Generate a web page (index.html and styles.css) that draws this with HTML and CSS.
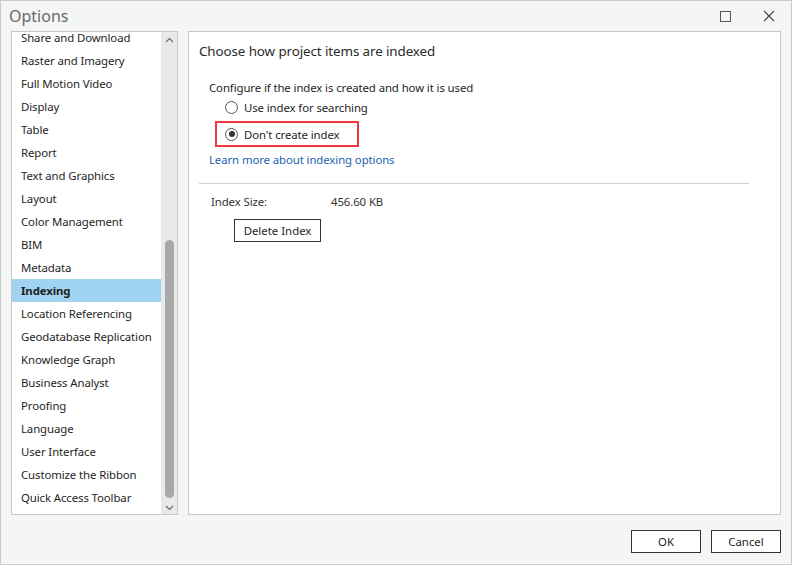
FILE: index.html
```html
<!DOCTYPE html>
<html lang="en">
<head>
    <meta charset="UTF-8">
    <title>Options</title>
    <link rel="stylesheet" href="styles.css">
</head>
<body>
    <div class="window">
        <div class="titlebar">
            <span class="title">Options</span>
            <div class="controls">
                <span class="max"></span>
                <svg class="close" width="12" height="12" viewBox="0 0 12 12">
                    <path d="M1 1 L11 11 M11 1 L1 11" stroke="#444" stroke-width="1.1" fill="none"/>
                </svg>
            </div>
        </div>

        <div class="body">
            <div class="sidebar">
                <ul class="menu">
                    <li>Share and Download</li>
                    <li>Raster and Imagery</li>
                    <li>Full Motion Video</li>
                    <li>Display</li>
                    <li>Table</li>
                    <li>Report</li>
                    <li>Text and Graphics</li>
                    <li>Layout</li>
                    <li>Color Management</li>
                    <li>BIM</li>
                    <li>Metadata</li>
                    <li class="active">Indexing</li>
                    <li>Location Referencing</li>
                    <li>Geodatabase Replication</li>
                    <li>Knowledge Graph</li>
                    <li>Business Analyst</li>
                    <li>Proofing</li>
                    <li>Language</li>
                    <li>User Interface</li>
                    <li>Customize the Ribbon</li>
                    <li>Quick Access Toolbar</li>
                </ul>
                <div class="scrollbar">
                    <svg class="arrow" width="9" height="6" viewBox="0 0 9 6">
                        <path d="M1 5 L4.5 1.5 L8 5" stroke="#666" stroke-width="1.1" fill="none"/>
                    </svg>
                    <div class="track">
                        <div class="thumb"></div>
                    </div>
                    <svg class="arrow" width="9" height="6" viewBox="0 0 9 6">
                        <path d="M1 1 L4.5 4.5 L8 1" stroke="#666" stroke-width="1.1" fill="none"/>
                    </svg>
                </div>
            </div>

            <div class="panel">
                <h2>Choose how project items are indexed</h2>

                <div class="section">
                    <p class="label">Configure if the index is created and how it is used</p>
                    <div class="radios">
                        <div class="radio">
                            <span class="dot"></span>
                            Use index for searching
                        </div>
                        <div class="radio checked highlight">
                            <span class="dot"></span>
                            Don't create index
                        </div>
                    </div>
                    <a class="link" href="#">Learn more about indexing options</a>
                </div>

                <hr>

                <div class="size-row">
                    <span class="size-label">Index Size:</span><span>456.60 KB</span>
                </div>
                <button class="btn delete">Delete Index</button>
            </div>
        </div>

        <div class="footer">
            <button class="btn">OK</button>
            <button class="btn">Cancel</button>
        </div>
    </div>
</body>
</html>
```

FILE: styles.css
```css
body {
    margin: 0;
    font-family: "Noto Sans", "Open Sans", sans-serif;
    font-size: 11.4px;
    letter-spacing: -0.1px;
    color: #1e1e1e;
}

.window {
    width: 792px;
    height: 565px;
    box-sizing: border-box;
    background-color: #f4f6f5;
    border: 1px solid #c9cbcb;
    display: flex;
    flex-direction: column;
}

.titlebar {
    height: 30px;
    display: flex;
    align-items: center;
    justify-content: space-between;
    padding-left: 8px;
}

.title {
    font-size: 16px;
    letter-spacing: 0;
    color: #6a6a6a;
}

.controls {
    display: flex;
    align-items: center;
    gap: 32px;
    padding-right: 16px;
}

.max {
    width: 9px;
    height: 9px;
    border: 1px solid #555;
}

.body {
    display: flex;
    gap: 10px;
    padding: 0 10px;
    height: 484px;
}

/* left list */
.sidebar {
    width: 167px;
    box-sizing: border-box;
    border: 1px solid #c6c8c8;
    background-color: #fff;
    display: flex;
    overflow: hidden;
}

.menu {
    list-style: none;
    margin: -6px 0 0 0;
    padding: 0;
    flex: 1;
}

.menu li {
    height: 23px;
    line-height: 23px;
    padding-left: 9px;
    white-space: nowrap;
}

.menu li.active {
    background-color: #a1d4f1;
    font-weight: bold;
}

.scrollbar {
    width: 16px;
    background-color: #e9e9e9;
    display: flex;
    flex-direction: column;
    align-items: center;
    padding: 2px 0 0;
}

.arrow {
    margin: 3px 0;
}

.track {
    flex: 1;
    width: 100%;
    display: flex;
    flex-direction: column;
    justify-content: flex-end;
    align-items: center;
    padding-bottom: 4px;
}

.thumb {
    width: 9px;
    height: 258px;
    background-color: #a9a9a9;
    border-radius: 5px;
}

/* right panel */
.panel {
    flex: 1;
    box-sizing: border-box;
    border: 1px solid #c6c8c8;
    background-color: #fff;
    padding: 10px 31px 0 10px;
}

.panel h2 {
    font-size: 13.4px;
    font-weight: normal;
    color: #2a2a2a;
    margin: 0 0 20px 0;
}

.section {
    padding-left: 10px;
}

.label {
    margin: 0;
}

.radios {
    padding-left: 6px;
}

.radio {
    display: inline-flex;
    align-items: center;
    gap: 6px;
    height: 24px;
    padding: 0 18px 0 8px;
    border: 2px solid transparent;
    box-sizing: border-box;
}

.radios .radio:first-child {
    display: flex;
    width: fit-content;
    margin-bottom: 2px;
}

.radio .dot {
    width: 11px;
    height: 11px;
    border-radius: 50%;
    border: 1px solid #555;
    background-color: #fff;
    position: relative;
}

.radio.checked .dot::after {
    content: "";
    position: absolute;
    left: 2.5px;
    top: 2.5px;
    width: 6px;
    height: 6px;
    border-radius: 50%;
    background-color: #333;
}

.radio.highlight {
    border-color: #ee3a3f;
    height: 26px;
}

.link {
    display: block;
    color: #1a62b0;
    text-decoration: none;
    margin-top: 5px;
}

hr {
    border: none;
    border-top: 1px solid #cfcfcf;
    margin: 16px 0 10px 0;
}

.size-row {
    padding-left: 12px;
    color: #333;
}

.size-label {
    display: inline-block;
    width: 120px;
}

.btn {
    font-family: "Noto Sans", "Open Sans", sans-serif;
    font-size: 11.4px;
    color: #1e1e1e;
    background-color: #fff;
    border: 1px solid #333;
    border-radius: 0;
    height: 23px;
    padding: 0;
}

.delete {
    display: block;
    width: 87px;
    margin: 10px 0 0 35px;
}

.footer {
    display: flex;
    justify-content: flex-end;
    gap: 10px;
    padding: 15px 10px 0 0;
}

.footer .btn {
    width: 70px;
}
```
